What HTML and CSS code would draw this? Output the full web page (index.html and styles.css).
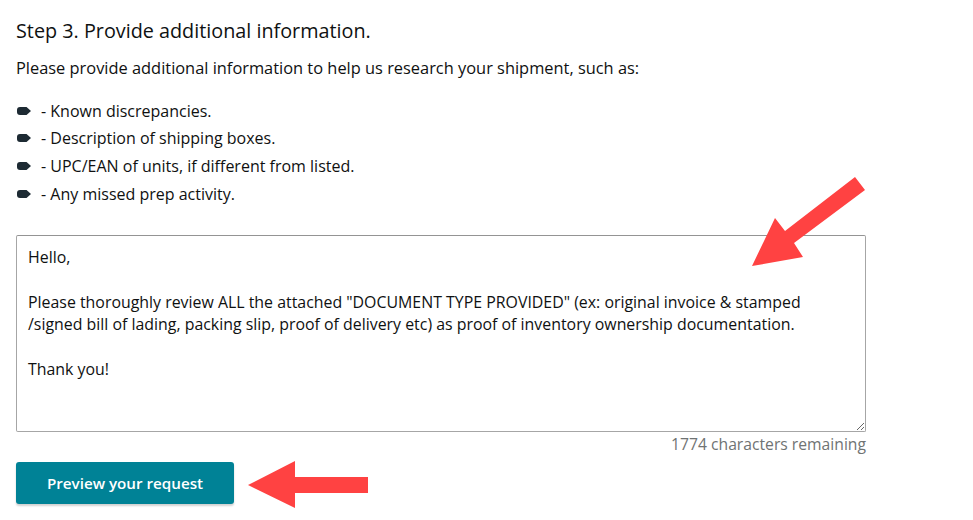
FILE: index.html
```html
<!DOCTYPE html>
<html lang="en">
<head>
<meta charset="utf-8">
<title>Step 3</title>
<link rel="stylesheet" href="styles.css">
</head>
<body>
<main class="page">
  <h2 class="title">Step 3. Provide additional information.</h2>
  <p class="intro">Please provide additional information to help us research your shipment, such as:</p>
  <ul class="list">
    <li><svg class="bullet" viewBox="0 0 14 8" width="14" height="8"><path d="M3 0H9.5L14 4L9.5 8H3A3 3 0 0 1 0 5V3A3 3 0 0 1 3 0Z"/></svg><span>- Known discrepancies.</span></li>
    <li><svg class="bullet" viewBox="0 0 14 8" width="14" height="8"><path d="M3 0H9.5L14 4L9.5 8H3A3 3 0 0 1 0 5V3A3 3 0 0 1 3 0Z"/></svg><span>- Description of shipping boxes.</span></li>
    <li><svg class="bullet" viewBox="0 0 14 8" width="14" height="8"><path d="M3 0H9.5L14 4L9.5 8H3A3 3 0 0 1 0 5V3A3 3 0 0 1 3 0Z"/></svg><span>- UPC/EAN of units, if different from listed.</span></li>
    <li><svg class="bullet" viewBox="0 0 14 8" width="14" height="8"><path d="M3 0H9.5L14 4L9.5 8H3A3 3 0 0 1 0 5V3A3 3 0 0 1 3 0Z"/></svg><span>- Any missed prep activity.</span></li>
  </ul>
  <div class="field">
    <textarea class="message" spellcheck="false">Hello,

Please thoroughly review ALL the attached "DOCUMENT TYPE PROVIDED" (ex: original invoice &amp; stamped
/signed bill of lading, packing slip, proof of delivery etc) as proof of inventory ownership documentation.

Thank you!</textarea>
    <div class="counter">1774 characters remaining</div>
  </div>
  <button class="btn" type="button">Preview your request</button>
</main>
<svg class="arrows" width="973" height="520" viewBox="0 0 973 520">
  <polygon points="855,177 785,231 775,218 752,266 803,257 794,243 865,190"/>
  <polygon points="248,485 295,461 295,477 368,477 368,493 295,493 295,508"/>
</svg>
</body>
</html>
```
FILE: styles.css
```css
html, body {
  margin: 0;
  padding: 0;
  background: #fff;
}
body {
  font-family: "Open Sans", "Noto Sans", sans-serif;
  color: #0f1111;
  position: relative;
  width: 973px;
  height: 520px;
  overflow: hidden;
}
.page {
  padding-left: 16px;
  width: 850px;
}
.title {
  margin: 19px 0 0;
  font-size: 19.8px;
  font-weight: 400;
  line-height: 24px;
}
.intro {
  margin: 14px 0 0;
  font-size: 16.4px;
  line-height: 22px;
}
.list {
  list-style: none;
  margin: 18px 0 0;
  padding: 0;
}
.list li {
  display: flex;
  align-items: center;
  gap: 10px;
  height: 27.67px;
  font-size: 16px;
  padding-left: 1px;
}
.bullet {
  fill: #1d2a33;
  flex: none;
}
.field {
  margin-top: 27px;
}
.message {
  display: block;
  box-sizing: border-box;
  width: 850px;
  height: 197px;
  margin: 0;
  padding: 10px 11px;
  font-family: inherit;
  font-size: 15.9px;
  line-height: 22.5px;
  color: #0f1111;
  border: 1px solid #a6a6a6;
  border-top-color: #949494;
  border-radius: 2px;
  outline: none;
  resize: vertical;
  background: #fff;
}
.counter {
  margin-top: 2px;
  text-align: right;
  font-size: 15.7px;
  line-height: 20px;
  color: #6f7373;
}
.btn {
  margin-top: 8px;
  width: 218px;
  height: 42px;
  border: 0;
  border-radius: 3px;
  background: #008296;
  color: #fff;
  font-family: inherit;
  font-size: 15.2px;
  font-weight: 600;
  box-shadow: 0 2px 2px rgba(0, 0, 0, 0.18);
  cursor: pointer;
}
.arrows {
  position: absolute;
  left: 0;
  top: 0;
  pointer-events: none;
}
.arrows polygon {
  fill: #ff4242;
}
```
